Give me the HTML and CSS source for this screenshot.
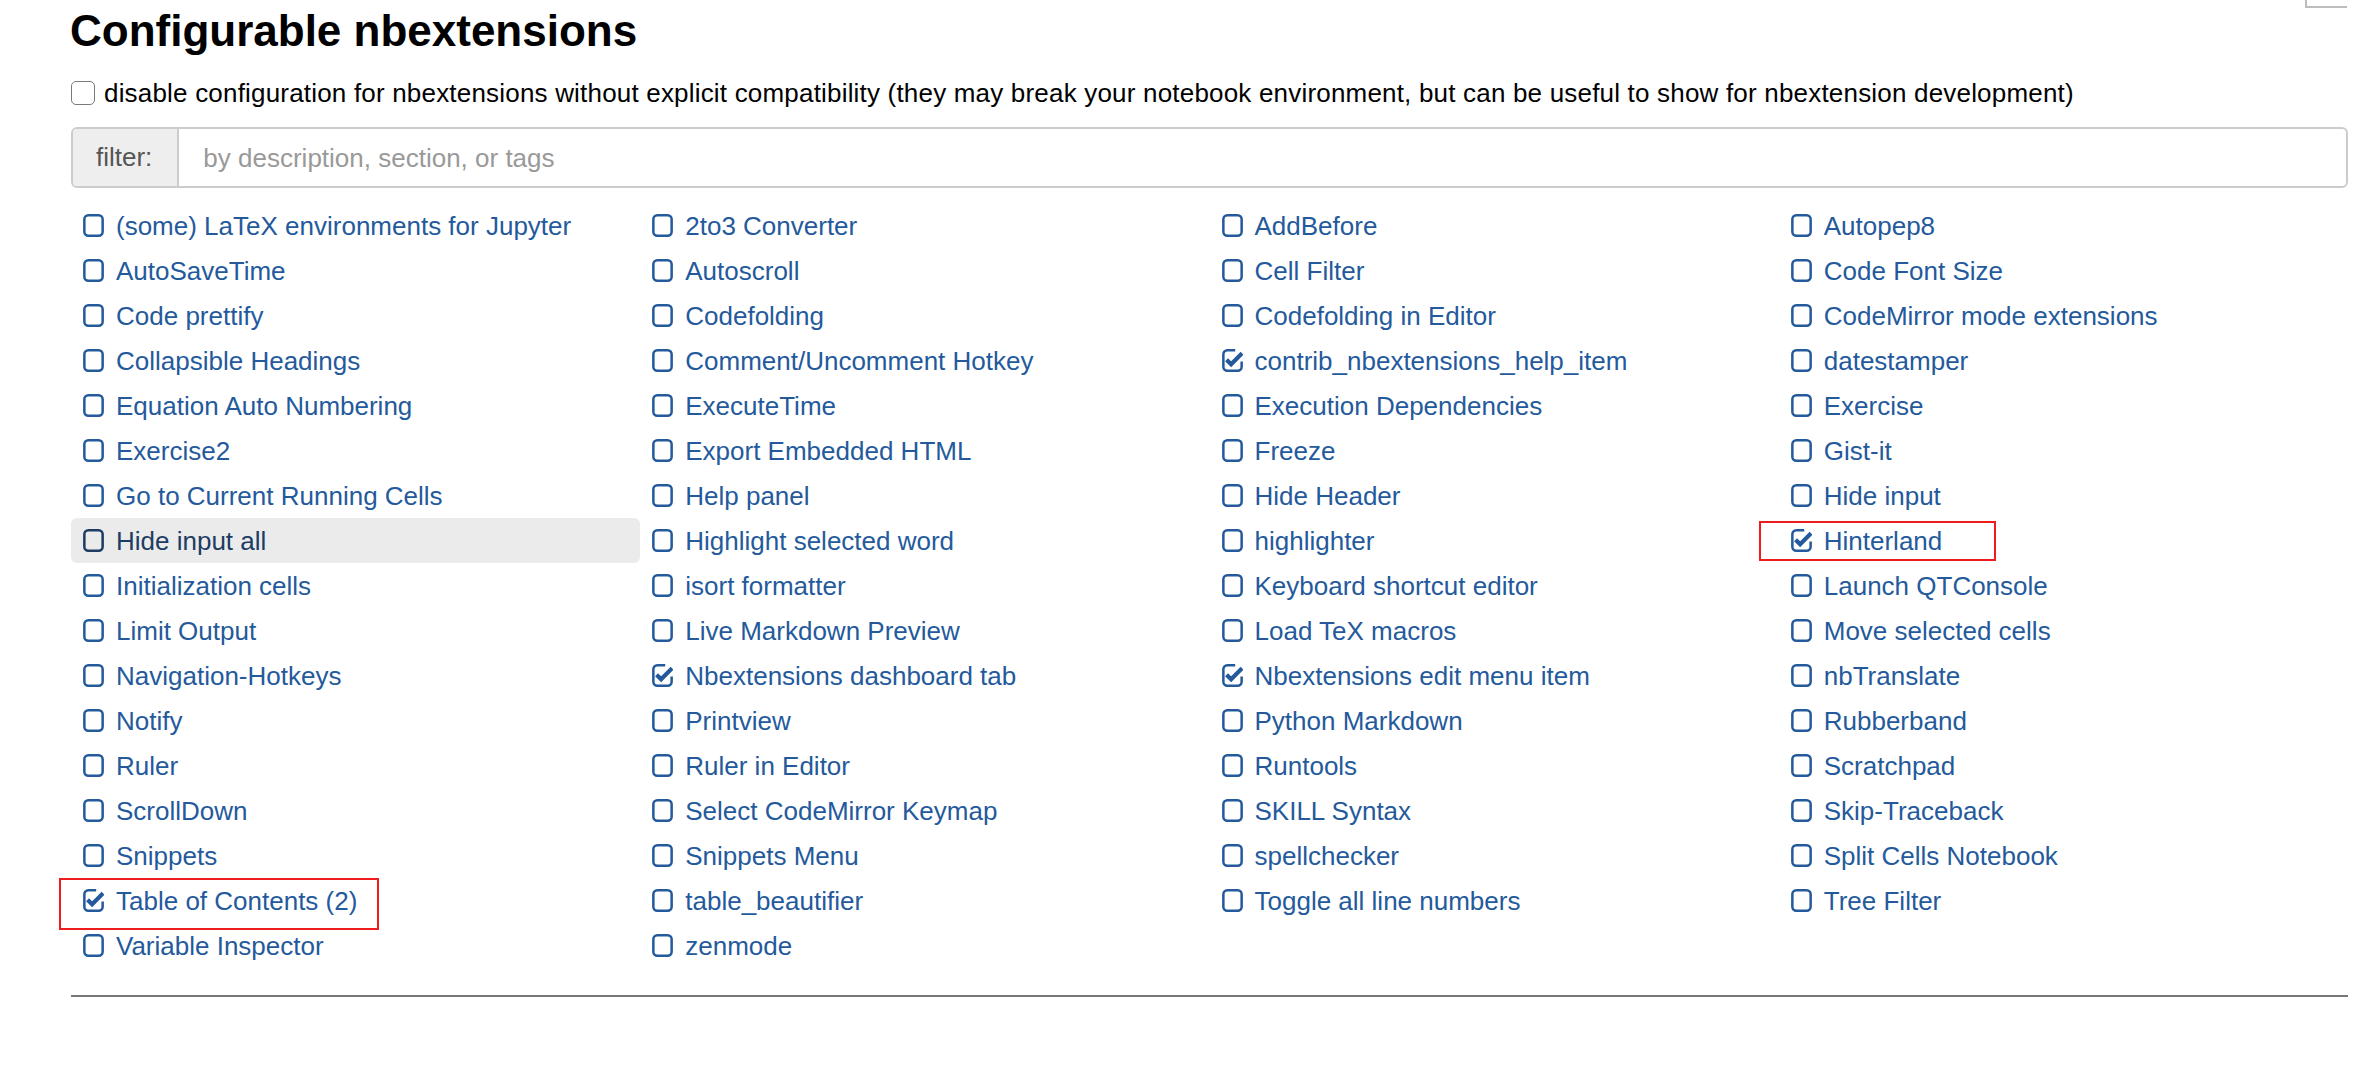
FILE: index.html
```html
<!DOCTYPE html>
<html>
<head>
<meta charset="utf-8">
<title>Configurable nbextensions</title>
<link rel="stylesheet" href="styles.css">
</head>
<body>
<svg class="defs" width="0" height="0" aria-hidden="true">
  <defs>
    <symbol id="sq" viewBox="0 0 20 22">
      <rect x="1.25" y="1.25" width="17.5" height="19.5" rx="3.8" fill="none" stroke="currentColor" stroke-width="2.4"/>
    </symbol>
    <symbol id="ck" viewBox="0 0 20 22">
      <path d="M12.6 1.25H5.05A3.8 3.8 0 0 0 1.25 5.05V16.95A3.8 3.8 0 0 0 5.05 20.75H14.95A3.8 3.8 0 0 0 18.75 16.95V12" fill="none" stroke="currentColor" stroke-width="2.4"/>
      <path d="M4.3 10.2L8.7 14.6L19.2 4.1" fill="none" stroke="currentColor" stroke-width="4" stroke-linejoin="miter"/>
    </symbol>
  </defs>
</svg>
<div class="page">
  <div class="head-row">
    <h1 class="title">Configurable nbextensions</h1>
    <div class="corner"></div>
  </div>
  <label class="compat">
    <span class="native-cb"></span>
    <span class="compat-text">disable configuration for nbextensions without explicit compatibility (they may break your notebook environment, but can be useful to show for nbextension development)</span>
  </label>
  <div class="filter">
    <span class="filter-label">filter:</span>
    <span class="filter-input">by description, section, or tags</span>
  </div>
  <ul class="ext-grid">
    <li class="item"><svg class="cb"><use href="#sq"/></svg><span class="lbl">(some) LaTeX environments for Jupyter</span></li>
    <li class="item"><svg class="cb"><use href="#sq"/></svg><span class="lbl">2to3 Converter</span></li>
    <li class="item"><svg class="cb"><use href="#sq"/></svg><span class="lbl">AddBefore</span></li>
    <li class="item"><svg class="cb"><use href="#sq"/></svg><span class="lbl">Autopep8</span></li>

    <li class="item"><svg class="cb"><use href="#sq"/></svg><span class="lbl">AutoSaveTime</span></li>
    <li class="item"><svg class="cb"><use href="#sq"/></svg><span class="lbl">Autoscroll</span></li>
    <li class="item"><svg class="cb"><use href="#sq"/></svg><span class="lbl">Cell Filter</span></li>
    <li class="item"><svg class="cb"><use href="#sq"/></svg><span class="lbl">Code Font Size</span></li>

    <li class="item"><svg class="cb"><use href="#sq"/></svg><span class="lbl">Code prettify</span></li>
    <li class="item"><svg class="cb"><use href="#sq"/></svg><span class="lbl">Codefolding</span></li>
    <li class="item"><svg class="cb"><use href="#sq"/></svg><span class="lbl">Codefolding in Editor</span></li>
    <li class="item"><svg class="cb"><use href="#sq"/></svg><span class="lbl">CodeMirror mode extensions</span></li>

    <li class="item"><svg class="cb"><use href="#sq"/></svg><span class="lbl">Collapsible Headings</span></li>
    <li class="item"><svg class="cb"><use href="#sq"/></svg><span class="lbl">Comment/Uncomment Hotkey</span></li>
    <li class="item"><svg class="cb"><use href="#ck"/></svg><span class="lbl">contrib_nbextensions_help_item</span></li>
    <li class="item"><svg class="cb"><use href="#sq"/></svg><span class="lbl">datestamper</span></li>

    <li class="item"><svg class="cb"><use href="#sq"/></svg><span class="lbl">Equation Auto Numbering</span></li>
    <li class="item"><svg class="cb"><use href="#sq"/></svg><span class="lbl">ExecuteTime</span></li>
    <li class="item"><svg class="cb"><use href="#sq"/></svg><span class="lbl">Execution Dependencies</span></li>
    <li class="item"><svg class="cb"><use href="#sq"/></svg><span class="lbl">Exercise</span></li>

    <li class="item"><svg class="cb"><use href="#sq"/></svg><span class="lbl">Exercise2</span></li>
    <li class="item"><svg class="cb"><use href="#sq"/></svg><span class="lbl">Export Embedded HTML</span></li>
    <li class="item"><svg class="cb"><use href="#sq"/></svg><span class="lbl">Freeze</span></li>
    <li class="item"><svg class="cb"><use href="#sq"/></svg><span class="lbl">Gist-it</span></li>

    <li class="item"><svg class="cb"><use href="#sq"/></svg><span class="lbl">Go to Current Running Cells</span></li>
    <li class="item"><svg class="cb"><use href="#sq"/></svg><span class="lbl">Help panel</span></li>
    <li class="item"><svg class="cb"><use href="#sq"/></svg><span class="lbl">Hide Header</span></li>
    <li class="item"><svg class="cb"><use href="#sq"/></svg><span class="lbl">Hide input</span></li>

    <li class="item hovered"><svg class="cb"><use href="#sq"/></svg><span class="lbl">Hide input all</span></li>
    <li class="item"><svg class="cb"><use href="#sq"/></svg><span class="lbl">Highlight selected word</span></li>
    <li class="item"><svg class="cb"><use href="#sq"/></svg><span class="lbl">highlighter</span></li>
    <li class="item"><svg class="cb"><use href="#ck"/></svg><span class="lbl">Hinterland</span><span class="mark mark-hint"></span></li>

    <li class="item"><svg class="cb"><use href="#sq"/></svg><span class="lbl">Initialization cells</span></li>
    <li class="item"><svg class="cb"><use href="#sq"/></svg><span class="lbl">isort formatter</span></li>
    <li class="item"><svg class="cb"><use href="#sq"/></svg><span class="lbl">Keyboard shortcut editor</span></li>
    <li class="item"><svg class="cb"><use href="#sq"/></svg><span class="lbl">Launch QTConsole</span></li>

    <li class="item"><svg class="cb"><use href="#sq"/></svg><span class="lbl">Limit Output</span></li>
    <li class="item"><svg class="cb"><use href="#sq"/></svg><span class="lbl">Live Markdown Preview</span></li>
    <li class="item"><svg class="cb"><use href="#sq"/></svg><span class="lbl">Load TeX macros</span></li>
    <li class="item"><svg class="cb"><use href="#sq"/></svg><span class="lbl">Move selected cells</span></li>

    <li class="item"><svg class="cb"><use href="#sq"/></svg><span class="lbl">Navigation-Hotkeys</span></li>
    <li class="item"><svg class="cb"><use href="#ck"/></svg><span class="lbl">Nbextensions dashboard tab</span></li>
    <li class="item"><svg class="cb"><use href="#ck"/></svg><span class="lbl">Nbextensions edit menu item</span></li>
    <li class="item"><svg class="cb"><use href="#sq"/></svg><span class="lbl">nbTranslate</span></li>

    <li class="item"><svg class="cb"><use href="#sq"/></svg><span class="lbl">Notify</span></li>
    <li class="item"><svg class="cb"><use href="#sq"/></svg><span class="lbl">Printview</span></li>
    <li class="item"><svg class="cb"><use href="#sq"/></svg><span class="lbl">Python Markdown</span></li>
    <li class="item"><svg class="cb"><use href="#sq"/></svg><span class="lbl">Rubberband</span></li>

    <li class="item"><svg class="cb"><use href="#sq"/></svg><span class="lbl">Ruler</span></li>
    <li class="item"><svg class="cb"><use href="#sq"/></svg><span class="lbl">Ruler in Editor</span></li>
    <li class="item"><svg class="cb"><use href="#sq"/></svg><span class="lbl">Runtools</span></li>
    <li class="item"><svg class="cb"><use href="#sq"/></svg><span class="lbl">Scratchpad</span></li>

    <li class="item"><svg class="cb"><use href="#sq"/></svg><span class="lbl">ScrollDown</span></li>
    <li class="item"><svg class="cb"><use href="#sq"/></svg><span class="lbl">Select CodeMirror Keymap</span></li>
    <li class="item"><svg class="cb"><use href="#sq"/></svg><span class="lbl">SKILL Syntax</span></li>
    <li class="item"><svg class="cb"><use href="#sq"/></svg><span class="lbl">Skip-Traceback</span></li>

    <li class="item"><svg class="cb"><use href="#sq"/></svg><span class="lbl">Snippets</span></li>
    <li class="item"><svg class="cb"><use href="#sq"/></svg><span class="lbl">Snippets Menu</span></li>
    <li class="item"><svg class="cb"><use href="#sq"/></svg><span class="lbl">spellchecker</span></li>
    <li class="item"><svg class="cb"><use href="#sq"/></svg><span class="lbl">Split Cells Notebook</span></li>

    <li class="item"><svg class="cb"><use href="#ck"/></svg><span class="lbl">Table of Contents (2)</span><span class="mark mark-toc"></span></li>
    <li class="item"><svg class="cb"><use href="#sq"/></svg><span class="lbl">table_beautifier</span></li>
    <li class="item"><svg class="cb"><use href="#sq"/></svg><span class="lbl">Toggle all line numbers</span></li>
    <li class="item"><svg class="cb"><use href="#sq"/></svg><span class="lbl">Tree Filter</span></li>

    <li class="item"><svg class="cb"><use href="#sq"/></svg><span class="lbl">Variable Inspector</span></li>
    <li class="item"><svg class="cb"><use href="#sq"/></svg><span class="lbl">zenmode</span></li>
  </ul>
  <hr class="rule">
</div>
</body>
</html>
```

FILE: styles.css
```css
html, body {
  margin: 0;
  padding: 0;
  background: #ffffff;
}

body {
  font-family: "Liberation Sans", Arial, Helvetica, sans-serif;
  color: #000000;
  font-size: 26px;
}

.defs {
  position: absolute;
  width: 0;
  height: 0;
  overflow: hidden;
}

.page {
  padding: 0 12px 0 71px;
}

.head-row {
  display: flex;
  justify-content: space-between;
  align-items: flex-start;
  height: 56px;
}

.title {
  margin: 0;
  padding-top: 6px;
  font-size: 44px;
  line-height: 50px;
  font-weight: bold;
  margin-left: -1px;
}

.corner {
  width: 40px;
  height: 6px;
  border-left: 2px solid #bdbdbd;
  border-bottom: 2px solid #bdbdbd;
  margin-right: 1px;
}

.compat {
  display: flex;
  align-items: center;
  gap: 9px;
  height: 30px;
  margin-top: 22px;
}

.native-cb {
  flex: none;
  width: 22px;
  height: 22px;
  border: 1.5px solid #7a7a7a;
  border-radius: 5px;
  background: #fff;
}

.compat-text {
  line-height: 30px;
  letter-spacing: 0.19px;
  white-space: nowrap;
}

.filter {
  display: flex;
  margin-top: 19px;
  height: 61px;
  box-sizing: border-box;
  border: 2px solid #cccccc;
  border-radius: 6px;
  overflow: hidden;
}

.filter-label {
  display: flex;
  align-items: center;
  padding: 0 25px 0 23px;
  background: #eeeeee;
  color: #555555;
  border-right: 2px solid #cccccc;
}

.filter-input {
  display: flex;
  align-items: center;
  padding-left: 24px;
  padding-top: 2px;
  color: #999999;
  flex: 1;
}

.ext-grid {
  list-style: none;
  margin: 15px 0 0 0;
  padding: 0;
  display: grid;
  grid-template-columns: repeat(4, 1fr);
  grid-auto-rows: 45px;
}

.item {
  position: relative;
  display: flex;
  align-items: center;
  gap: 12px;
  padding-left: 12px;
  color: #245a9c;
  border-radius: 6px;
}

.item.hovered {
  background: #ebebeb;
  color: #1d3c63;
}

.cb {
  flex: none;
  width: 21px;
  height: 23px;
  color: inherit;
}

.lbl {
  line-height: 30px;
  white-space: nowrap;
}

.mark {
  position: absolute;
  border: 2px solid #ee1c1c;
  box-sizing: border-box;
  pointer-events: none;
}

.mark-toc {
  left: -12px;
  top: 0;
  width: 320px;
  height: 52px;
}

.mark-hint {
  left: -20px;
  top: 3px;
  width: 237px;
  height: 40px;
}

.rule {
  margin: 27px 0 0 0;
  border: 0;
  height: 2px;
  background: #777777;
}
```
